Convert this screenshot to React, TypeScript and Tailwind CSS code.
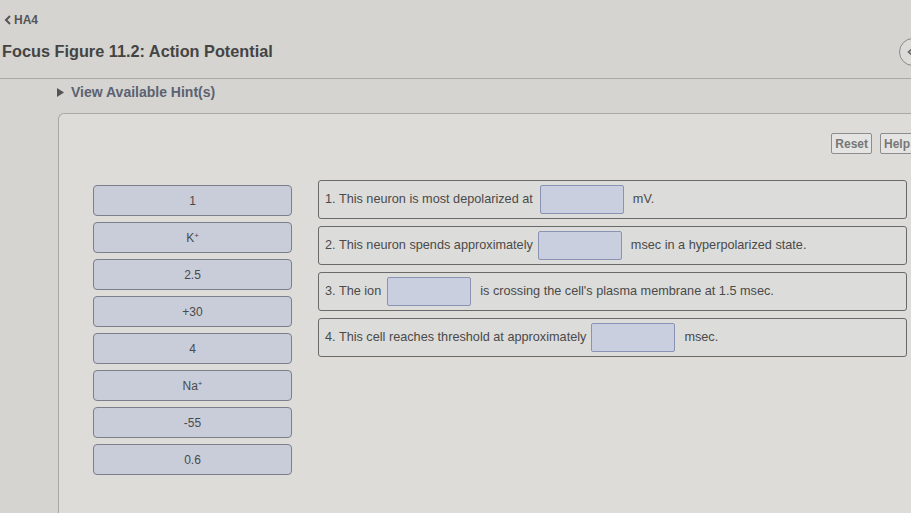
import React from "react";

const tiles: { label: React.ReactNode }[] = [
  { label: "1" },
  { label: <span>K<sup className="text-[8px]">+</sup></span> },
  { label: "2.5" },
  { label: "+30" },
  { label: "4" },
  { label: <span>Na<sup className="text-[8px]">+</sup></span> },
  { label: "-55" },
  { label: "0.6" },
];

function Blank() {
  return (
    <div className="w-[84px] h-[29px] shrink-0 rounded-[2px] border border-[#8a93b3] bg-[#c9cfdf]" />
  );
}

function Sentence({ children }: { children: React.ReactNode }) {
  return (
    <div className="h-[39px] flex items-center pl-[6px] rounded-[3px] border-[1.5px] border-[#6a6a6a] bg-[#dcdcda] text-[12.7px] text-[#4a4a4a]">
      {children}
    </div>
  );
}

export default function App() {
  return (
    <div
      className="w-[911px] h-[513px] overflow-hidden bg-[#d5d4d0] text-[#4a4a4a]"
      style={{ fontFamily: '"Liberation Sans", Arial, sans-serif' }}
    >
      <div className="pt-[11px] pl-[4px] flex items-center gap-[2px] text-[12px] font-bold text-[#555]">
        <svg width="8" height="10" viewBox="0 0 8 10">
          <path d="M6 1 L2 5 L6 9" stroke="#555" strokeWidth="2" fill="none" />
        </svg>
        <span>HA4</span>
      </div>
      <div className="flex items-center justify-between border-b border-[#a9a9a7] h-[50px] pl-[2px] pb-[4px]">
        <div className="text-[16.3px] font-bold text-[#444]">Focus Figure 11.2: Action Potential</div>
        <div className="mr-[-16px] w-[28px] h-[28px] rounded-full border border-[#8a8a8a] bg-[#dcdbd8] flex items-center pl-[7px]">
          <svg width="6" height="8" viewBox="0 0 6 8">
            <path d="M5 1 L1.5 4 L5 7" stroke="#666" strokeWidth="1.6" fill="none" />
          </svg>
        </div>
      </div>
      <div className="flex items-center gap-[7px] pl-[57px] mt-[3px] h-[20px] text-[14px] font-bold text-[#5b6272]">
        <svg width="7" height="9" viewBox="0 0 7 9">
          <path d="M0 0 L7 4.5 L0 9 Z" fill="#555" />
        </svg>
        <span>View Available Hint(s)</span>
      </div>
      <div className="ml-[58px] mt-[11px] w-[872px] h-[420px] rounded-tl-[6px] border-l border-t border-[#a8a8a6] bg-[#dddcd9]">
        <div className="flex justify-end gap-[8px] pt-[19px] pr-[16px]">
          <button className="h-[21px] px-[3px] rounded-[2px] border border-[#8d8d8d] bg-[#e4e4e2] text-[12px] font-bold text-[#777]">
            Reset
          </button>
          <button className="h-[21px] px-[3px] rounded-[2px] border border-[#8d8d8d] bg-[#e4e4e2] text-[12px] font-bold text-[#777]">
            Help
          </button>
        </div>
        <div className="flex mt-[26px] pl-[34px]">
          <div className="w-[199px] flex flex-col gap-[6px] mt-[5px]">
            {tiles.map((t, i) => (
              <div
                key={i}
                className="h-[31px] flex items-center justify-center rounded-[4px] border-[1.5px] border-[#7b7f8c] bg-[#c9cdd9] text-[12px] text-[#4a4a4a]"
              >
                {t.label}
              </div>
            ))}
          </div>
          <div className="ml-[26px] w-[589px] flex flex-col gap-[7px]">
            <Sentence>
              <span>1. This neuron is most depolarized at</span>
              <span className="ml-[7px]"><Blank /></span>
              <span className="ml-[9px]">mV.</span>
            </Sentence>
            <Sentence>
              <span>2. This neuron spends approximately</span>
              <span className="ml-[5px]"><Blank /></span>
              <span className="ml-[9px]">msec in a hyperpolarized state.</span>
            </Sentence>
            <Sentence>
              <span>3. The ion</span>
              <span className="ml-[6px]"><Blank /></span>
              <span className="ml-[9px]">is crossing the cell's plasma membrane at 1.5 msec.</span>
            </Sentence>
            <Sentence>
              <span>4. This cell reaches threshold at approximately</span>
              <span className="ml-[5px]"><Blank /></span>
              <span className="ml-[9px]">msec.</span>
            </Sentence>
          </div>
        </div>
      </div>
    </div>
  );
}
